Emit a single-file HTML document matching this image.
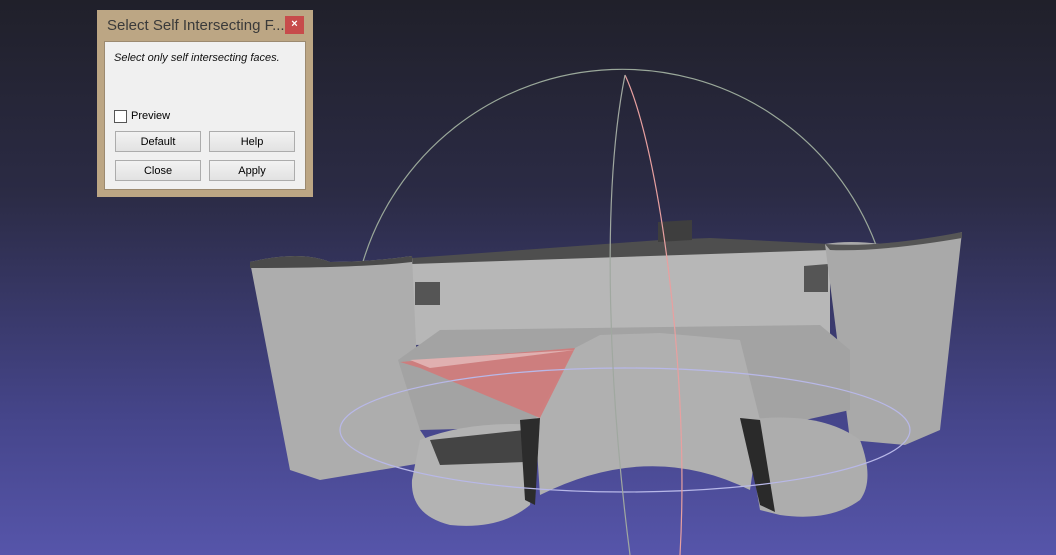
<!DOCTYPE html><html><head><style>
body{margin:0;width:1056px;height:555px;overflow:hidden;background:linear-gradient(#20202a 0%,#2b2b45 35%,#45458a 75%,#5655aa 100%);font-family:"Liberation Sans",sans-serif;position:relative}
svg{position:absolute;left:0;top:0}
.dlg{position:absolute;left:97px;top:10px;width:216px;height:187px;background:#bca684;box-sizing:border-box}
.tt{position:absolute;left:10px;top:7px;font-size:15px;color:#3a3a3a}
.x{position:absolute;left:188px;top:6px;width:19px;height:18px;background:#c74b4b;color:#fff;font-size:11px;text-align:center;line-height:17px;font-weight:bold}
.pn{position:absolute;left:7px;top:31px;width:202px;height:149px;background:#f0f0f0;border:1px solid #9c8a70;box-sizing:border-box}
.pn i{position:absolute;left:9px;top:10px;font-size:11px;color:#111}
.cb{position:absolute;left:9px;top:68px;width:11px;height:11px;border:1px solid #555;background:#fff}
.pl{position:absolute;left:26px;top:68px;font-size:11px}
.b{position:absolute;width:86px;height:21px;border:1px solid #acacac;background:linear-gradient(#f2f2f2,#e2e2e2);font-size:11px;text-align:center;line-height:20px;box-sizing:border-box}
</style></head><body>
<svg width="1056" height="555">
<path d="M362 265 A271 271 0 0 1 876 245" fill="none" stroke="#9aa89a" stroke-width="1.2"/>
<!-- back plate -->
<polygon points="410,262 830,248 830,340 410,345" fill="#b7b7b7"/>
<polygon points="412,258 660,240 710,238 830,244 830,250 412,264" fill="#4e4e4e"/>
<polygon points="658,222 692,220 692,240 658,242" fill="#3e3e3e"/>
<polygon points="415,282 440,282 440,305 415,305" fill="#555"/>
<polygon points="804,266 828,264 828,292 804,292" fill="#555"/>
<!-- left wing -->
<path d="M250 262 Q300 250 330 262 Q370 262 412 256 L420 430 L440 460 Q380 470 320 480 L290 470 Z" fill="#adadad"/>
<path d="M250 262 Q300 250 330 262 Q370 262 412 256 L412 262 Q360 268 250 268 Z" fill="#4a4a4a"/>
<!-- right wing -->
<path d="M825 244 Q850 240 880 244 Q920 244 962 232 L940 430 L905 445 L850 440 Z" fill="#a9a9a9"/>
<path d="M825 244 Q880 248 962 232 L962 238 Q880 252 830 250 Z" fill="#555"/>
<!-- front block -->
<polygon points="398,360 440,330 820,325 850,350 850,410 805,420 420,430" fill="#a3a3a3"/>
<path d="M575 348 L600 335 L660 333 L740 340 L760 420 L750 490 Q650 440 540 495 L535 420 Z" fill="#b0b0b0"/>
<!-- lobes -->
<path d="M420 440 Q470 420 540 425 L530 505 Q500 530 450 525 Q410 515 412 480 Z" fill="#b3b3b3"/>
<polygon points="430,440 525,430 525,462 440,465" fill="#444"/>
<path d="M745 420 Q820 410 860 440 Q875 480 860 500 Q830 522 780 515 L760 510 Z" fill="#adadad"/>
<polygon points="740,418 760,420 775,512 760,505" fill="#2a2a2a"/>
<polygon points="520,420 540,418 535,505 525,500" fill="#2c2c2c"/>
<polygon points="400,362 575,348 540,418 420,368" fill="#d27a7a" opacity=".9"/>
<polygon points="410,360 575,350 430,368" fill="#e0b0b0"/>
<ellipse cx="625" cy="430" rx="285" ry="62" fill="none" stroke="#b8b8e8" stroke-width="1.2"/>
<path d="M625 75 C660 150 690 380 680 555" fill="none" stroke="#e8a0a0" stroke-width="1.2"/>
<path d="M625 75 C600 200 610 400 630 555" fill="none" stroke="#a0a8a0" stroke-width="1.2"/>
</svg>
<div class="dlg"><div class="tt">Select Self Intersecting F...</div><div class="x">×</div>
<div class="pn"><i>Select only self intersecting faces.</i><div class="cb"></div><div class="pl">Preview</div>
<div class="b" style="left:10px;top:89px">Default</div><div class="b" style="left:104px;top:89px">Help</div>
<div class="b" style="left:10px;top:118px">Close</div><div class="b" style="left:104px;top:118px">Apply</div></div></div>
</body></html>
